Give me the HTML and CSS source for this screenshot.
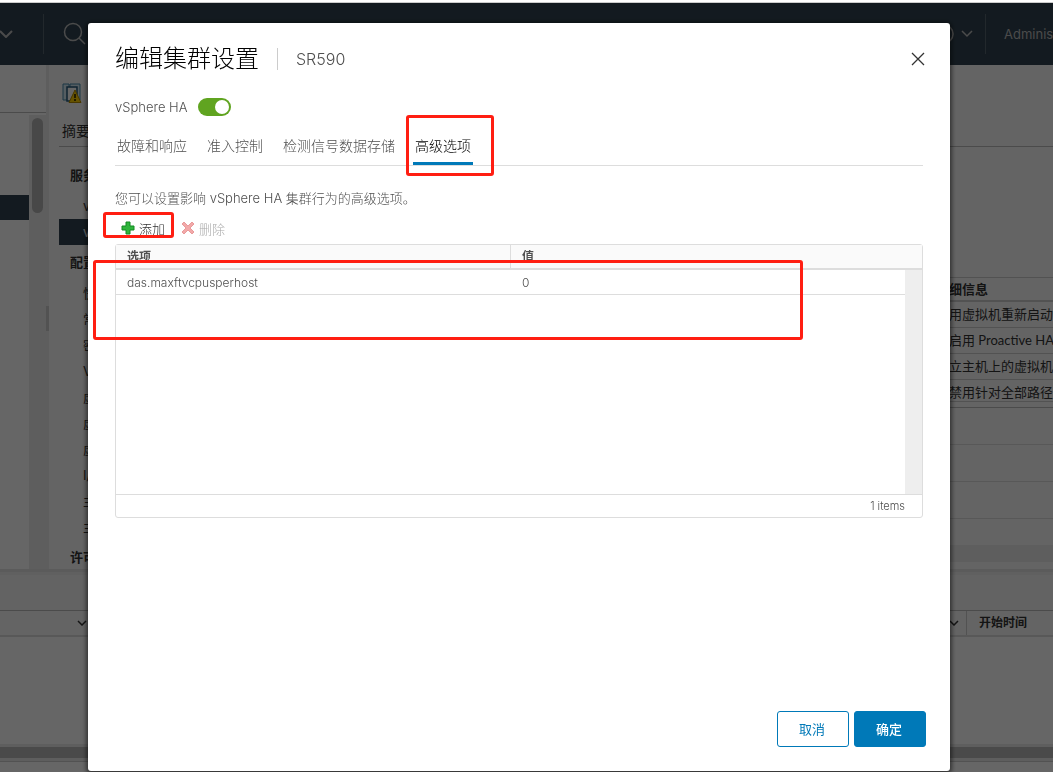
FILE: index.html
```html
<!DOCTYPE html>
<html lang="zh-CN">
<head>
    <meta charset="utf-8">
    <title>编辑集群设置</title>
    <link rel="stylesheet" href="styles.css">
</head>
<body>
    <div class="top-strip"></div>
    <div class="app">
        <header class="app-header">
            <svg class="menu-arrow" width="14" height="8" viewBox="0 0 14 8"><path d="M1 1l6 6 6-6" fill="none" stroke="currentColor" stroke-width="2"/></svg>
            <div class="header-line"></div>
            <svg class="search-icon" width="24" height="24" viewBox="0 0 24 24" fill="none" stroke="currentColor" stroke-width="1.5"><circle cx="10" cy="10" r="8.5"/><path d="M16 16l6 6"/></svg>
            <div class="spacer"></div>
            <svg class="help-icon" width="20" height="20" viewBox="0 0 20 20"><circle cx="10" cy="10" r="9" fill="none" stroke="currentColor" stroke-width="1.5"/></svg>
            <svg class="help-arrow" width="12" height="8" viewBox="0 0 12 8"><path d="M1 1l5 5 5-5" fill="none" stroke="currentColor" stroke-width="1.5"/></svg>
            <div class="header-line"></div>
            <span class="user">Adminis</span>
        </header>

        <div class="workspace">
            <aside class="sidebar">
                <div class="sidebar-top"></div>
                <div class="tree">
                    <div class="tree-list"><div class="tree-selected"></div></div>
                    <div class="tree-scroll"><div class="tree-thumb"></div></div>
                </div>
            </aside>
            <div class="splitter"><div class="splitter-handle"></div></div>
            <main class="content">
                <div class="object-title">
                    <svg width="20" height="21" viewBox="0 0 20 21">
                        <path d="M1 1h6v16H1zM8 1h10v16H8z" fill="#d4e8f2" stroke="#4789ab"/>
                        <path d="M5 4h10v14H5z" fill="#fff" stroke="#24587a" stroke-width="1.5"/>
                        <path d="M13 7l6 12.500H7z" fill="#ffd000" stroke="#b68d00"/>
                        <path d="M13 11v4M13 16v2" stroke="#594700" stroke-width="2"/>
                    </svg>
                </div>
                <div class="object-tabs">摘要</div>
                <div class="object-body">
                    <nav class="settings-nav">
                        <h4>服务</h4>
                        <a href="#">vSphere DRS</a>
                        <a href="#" class="selected">vSphere HA</a>
                        <h4>配置</h4>
                        <a href="#">快速入门</a>
                        <a href="#">常规</a>
                        <a href="#">密钥提供程序</a>
                        <a href="#">VMware EVC</a>
                        <a href="#">虚拟机/主机组</a>
                        <a href="#">虚拟机/主机规则</a>
                        <a href="#">虚拟机替代项</a>
                        <a href="#">I/O 筛选器</a>
                        <a href="#">主机选项</a>
                        <a href="#">主机配置文件</a>
                        <h4>许可</h4>
                    </nav>
                    <section class="details">
                        <div class="details-head">细信息</div>
                        <div class="details-row">用虚拟机重新启动</div>
                        <div class="details-row">启用 Proactive HA</div>
                        <div class="details-row">立主机上的虚拟机</div>
                        <div class="details-row last">禁用针对全部路径</div>
                        <div class="details-block first"></div>
                        <div class="details-block"></div>
                        <div class="details-block"></div>
                        <div class="details-block"></div>
                        <div class="details-scroll"></div>
                    </section>
                </div>
            </main>
        </div>

        <section class="tasks">
            <div class="tasks-bar"></div>
            <div class="tasks-head">
                <svg width="10" height="6" viewBox="0 0 10 6"><path d="M1 1l4 4 4-4" fill="none" stroke="currentColor" stroke-width="1.5"/></svg>
                <div class="spacer"></div>
                <svg width="10" height="6" viewBox="0 0 10 6"><path d="M1 1l4 4 4-4" fill="none" stroke="currentColor" stroke-width="1.5"/></svg>
                <span class="tasks-col">开始时间</span>
            </div>
            <div class="tasks-body"></div>
            <div class="tasks-scroll"></div>
            <div class="tasks-foot"></div>
        </section>
    </div>

    <div class="backdrop">
        <div class="modal" role="dialog" aria-labelledby="modal-title">
            <div class="modal-header">
                <h1 id="modal-title">编辑集群设置</h1>
                <span class="cluster-name">SR590</span>
                <button type="button" class="close" aria-label="关闭">
                    <svg width="16" height="16" viewBox="0 0 16 16"><path d="M2 2l12 12M14 2L2 14" stroke="currentColor" stroke-width="1.3"/></svg>
                </button>
            </div>

            <div class="ha-row">
                <label for="ha-toggle">vSphere HA</label>
                <input type="checkbox" id="ha-toggle" class="toggle" checked>
            </div>

            <div class="tabs">
                <button type="button" class="tab">故障和响应</button>
                <button type="button" class="tab">准入控制</button>
                <button type="button" class="tab">检测信号数据存储</button>
                <button type="button" class="tab active">高级选项<span class="mark mark-tab"></span></button>
            </div>

            <p class="hint">您可以设置影响 vSphere HA 集群行为的高级选项。</p>

            <div class="toolbar">
                <button type="button" class="tool">
                    <svg width="14" height="14" viewBox="0 0 14 14"><path d="M5 1h4v4h4v4H9v4H5V9H1V5h4z" fill="#2fb53c" stroke="#128a22"/></svg>
                    <span>添加</span>
                    <span class="mark mark-add"></span>
                </button>
                <button type="button" class="tool" disabled>
                    <svg width="14" height="14" viewBox="0 0 14 14"><path d="M3 1l4 4 4-4 2 2-4 4 4 4-2 2-4-4-4 4-2-2 4-4-4-4z" fill="#f2a9a9" stroke="#e99a9a"/></svg>
                    <span>删除</span>
                </button>
            </div>

            <div class="datagrid">
                <table>
                    <thead>
                        <tr>
                            <th class="col-option">选项</th>
                            <th class="col-value">值</th>
                            <th class="col-scroll"></th>
                        </tr>
                    </thead>
                    <tbody>
                        <tr class="item">
                            <td>das.maxftvcpusperhost</td>
                            <td>0</td>
                            <td class="scroll" rowspan="2"></td>
                        </tr>
                        <tr class="empty">
                            <td colspan="2"></td>
                        </tr>
                    </tbody>
                </table>
                <div class="datagrid-foot">1 items</div>
                <span class="mark mark-grid"></span>
            </div>

            <div class="modal-footer">
                <button type="button" class="btn">取消</button>
                <button type="button" class="btn btn-primary">确定</button>
            </div>
        </div>
    </div>
</body>
</html>
```
FILE: styles.css
```css
* {
    box-sizing: border-box;
}

body {
    margin: 0;
    height: 100vh;
    display: flex;
    flex-direction: column;
    overflow: hidden;
    font-family: Inter, "Noto Sans CJK SC", sans-serif;
    font-size: 13px;
    font-weight: 300;
    color: #505050;
}

button {
    font: inherit;
    color: inherit;
    background: none;
    border: none;
    padding: 0;
    cursor: pointer;
}

svg {
    display: block;
    flex-shrink: 0;
}

.spacer {
    flex: 1;
}

/* page behind the dialog */
.top-strip {
    height: 3px;
    flex-shrink: 0;
    background: #fff;
    border-bottom: 1px solid #ccc;
}

.app {
    flex: 1;
    min-height: 0;
    display: flex;
    flex-direction: column;
    background: #fff;
    color: #333;
    font-weight: 400;
}

.app-header {
    height: 62px;
    flex-shrink: 0;
    display: flex;
    align-items: center;
    background: #314351;
    color: #bbb;
}

.menu-arrow {
    margin-left: -1px;
}

.header-line {
    width: 1px;
    height: 40px;
    margin-left: 30px;
    background: #56646f;
}

.search-icon {
    margin-left: 19px;
}

.help-arrow {
    margin-left: 7px;
}

.help-arrow + .header-line {
    margin-left: 12px;
}

.user {
    width: 67px;
    padding-left: 18px;
}

.workspace {
    flex: 1;
    min-height: 0;
    display: flex;
}

.sidebar {
    width: 46px;
    display: flex;
    flex-direction: column;
}

.sidebar-top {
    height: 48px;
    border-bottom: 1px solid #bbb;
}

.tree {
    flex: 1;
    display: flex;
    padding-top: 2px;
}

.tree-list {
    flex: 1;
    padding-top: 80px;
}

.tree-selected {
    height: 25px;
    background: #314351;
}

.tree-scroll {
    width: 17px;
    padding: 3px;
    background: #ececec;
}

.tree-thumb {
    width: 11px;
    height: 95px;
    border-radius: 6px;
    background: #b4b4b4;
}

.splitter {
    width: 3px;
    padding-top: 241px;
    background: #ececec;
}

.splitter-handle {
    height: 25px;
    background: #ccc;
}

.content {
    flex: 1;
    min-width: 0;
    display: flex;
    flex-direction: column;
    padding-left: 10px;
    background: #fafafa;
}

.object-title {
    padding: 18px 3px 0;
}

.object-tabs {
    height: 43px;
    padding: 16px 3px 0;
    line-height: 22px;
    font-size: 14px;
    border-bottom: 1px solid #bbb;
}

.object-body {
    flex: 1;
    min-height: 0;
    display: flex;
    justify-content: space-between;
}

.settings-nav {
    width: 40px;
    padding-top: 11px;
    overflow: hidden;
    white-space: nowrap;
}

.settings-nav h4 {
    margin: 0;
    padding-left: 11px;
    font-size: 13px;
    line-height: 35px;
}

.settings-nav a {
    display: block;
    padding-left: 24px;
    line-height: 26px;
    color: #333;
    text-decoration: none;
}

.settings-nav .selected {
    background: #314351;
    color: #fff;
}

.details {
    width: 104px;
    padding-top: 130px;
    font-family: Lato, "Noto Sans CJK SC", sans-serif;
    white-space: nowrap;
}

.details-head {
    height: 25px;
    font-weight: bold;
    line-height: 22px;
    border-top: 1px solid #ccc;
    border-bottom: 2px solid #ccc;
}

.details-row {
    height: 26px;
    line-height: 24px;
    border-bottom: 1px solid #ccc;
}

.details-row.last {
    height: 22px;
}

.details-block {
    height: 37px;
    border-bottom: 1px solid #ddd;
}

.details-block.first {
    height: 6px;
    border-color: #bbb;
}

.details-scroll {
    height: 17px;
    margin-top: 26px;
    background: #ececec;
}

.tasks {
    display: flex;
    flex-direction: column;
    height: 203px;
    flex-shrink: 0;
    border-top: 3px solid #e4e4e4;
}

.tasks-bar {
    height: 39px;
    background: #f8f8f8;
    border-top: 3px solid #f0f0f0;
    border-bottom: 1px solid #bbb;
}

.tasks-head {
    display: flex;
    align-items: center;
    height: 26px;
    padding-left: 77px;
    background: #fafafa;
    border-bottom: 2px solid #ddd;
}

.tasks-col {
    width: 87px;
    margin-left: 7px;
    padding-left: 12px;
    line-height: 24px;
    border-left: 1px solid #ccc;
    font-size: 12px;
    font-weight: bold;
}

.tasks-body {
    flex: 1;
}

.tasks-scroll {
    height: 17px;
    background: #bababa;
    border-top: 3px solid #ececec;
    border-bottom: 3px solid #ececec;
}

.tasks-foot {
    height: 11px;
    border-top: 1px solid #ccc;
}

/* dialog */
.backdrop {
    position: fixed;
    top: 3px;
    right: 0;
    bottom: 0;
    left: 0;
    display: flex;
    padding: 20px 103px 1px 88px;
    background: rgba(0, 0, 0, 0.6);
}

.modal {
    flex: 1;
    min-width: 0;
    display: flex;
    flex-direction: column;
    padding: 18px 24px 24px 27px;
    background: #fff;
    border-radius: 3px;
    box-shadow: 0 1px 4px 2px rgba(0, 0, 0, 0.5);
}

.modal-header {
    display: flex;
    align-items: center;
    height: 36px;
}

.modal-header h1 {
    margin: 0;
    padding-right: 18px;
    font-size: 24px;
    font-weight: 300;
    line-height: 24px;
    color: #000;
}

.cluster-name {
    padding-left: 18px;
    font-size: 16px;
    line-height: 22px;
    border-left: 1px solid #ccc;
}

.close {
    margin-left: auto;
    color: #333;
}

.ha-row {
    display: flex;
    align-items: center;
    gap: 11px;
    height: 24px;
    margin-top: 18px;
}

.toggle {
    appearance: none;
    width: 33px;
    height: 18px;
    margin: 0;
    padding: 2px;
    border-radius: 9px;
    background: #60a420;
}

.toggle::before {
    content: "";
    display: block;
    width: 14px;
    height: 14px;
    margin-left: auto;
    border-radius: 50%;
    background: #fff;
}

.tabs {
    display: flex;
    gap: 16px;
    height: 47px;
    margin-right: 3px;
    border-bottom: 1px solid #ddd;
}

.tab {
    position: relative;
    padding: 9px 2px 0;
    font-size: 14px;
    border-bottom: 3px solid transparent;
}

.tab.active {
    color: #000;
    border-color: #0079b8;
}

.hint {
    margin: 22px 0 0;
    line-height: 20px;
}

.toolbar {
    display: flex;
    gap: 16px;
    padding: 9px 6px 5px;
}

.tool {
    position: relative;
    display: flex;
    align-items: center;
    gap: 4px;
    height: 22px;
    color: #333;
}

.tool:disabled {
    color: #aaa;
    cursor: default;
}

.datagrid {
    position: relative;
    margin-right: 3px;
    font-size: 12px;
    border: 1px solid #ddd;
    border-radius: 3px;
}

.datagrid table {
    width: 100%;
    table-layout: fixed;
    border-collapse: separate;
    border-spacing: 0;
}

.datagrid th,
.datagrid td {
    padding: 0 11px;
    text-align: left;
}

.datagrid th {
    height: 25px;
    line-height: 20px;
    background: #fafafa;
    border-bottom: 2px solid #ddd;
}

.datagrid .col-option {
    width: 49%;
    border-right: 1px solid #ddd;
}

.datagrid .col-scroll {
    width: 17px;
    padding: 0;
}

.item td {
    height: 25px;
    border-bottom: 1px solid #ddd;
}

.datagrid .scroll {
    padding: 0;
    background: #eee;
    border: none;
}

.empty td {
    height: 199px;
}

.datagrid-foot {
    padding-right: 17px;
    font-size: 11px;
    line-height: 22px;
    text-align: right;
    border-top: 1px solid #ddd;
}

.modal-footer {
    display: flex;
    justify-content: flex-end;
    gap: 5px;
    margin-top: auto;
}

.btn {
    width: 72px;
    height: 36px;
    padding: 0 2px 2px 0;
    border: 1px solid #0079b8;
    border-radius: 3px;
    color: #0079b8;
    font-weight: 400;
}

.btn-primary {
    background: #0079b8;
    color: #fff;
    font-weight: 500;
}

/* red highlight frames */
.mark {
    position: absolute;
    border: 3px solid #ff1e12;
    border-radius: 3px;
    pointer-events: none;
}

.mark-tab {
    top: -4px;
    right: -21px;
    bottom: -14px;
    left: -7px;
}

.mark-add {
    top: -5px;
    right: -9px;
    bottom: 1px;
    left: -18px;
}

.mark-grid {
    top: 15px;
    right: 119px;
    height: 80px;
    left: -23px;
}
```
